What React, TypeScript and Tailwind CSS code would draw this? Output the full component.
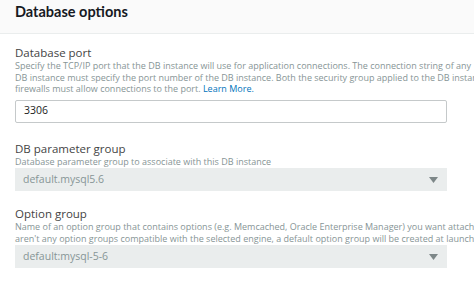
export default function App() {
  return (
    <div className="w-[474px] h-[282px] overflow-hidden bg-white font-['Open_Sans',sans-serif]">
      <div className="h-[34px] bg-[#fafafa] border-b border-[#eaeded] px-[15px] pt-[4px]">
        <h2 className="font-['Lato',sans-serif] text-[14.5px] font-bold text-[#16191f] leading-[16px]">Database options</h2>
      </div>
      <div className="pl-[15px] pr-[27px] pt-[12px]">
        <div>
          <label className="block text-[11.5px] leading-[14px] text-[#444]">Database port</label>
          <p className="text-[9px] leading-[11.5px] text-[#879596] whitespace-nowrap">
            Specify the TCP/IP port that the DB instance will use for application connections. The connection string of any
            <br />
            DB instance must specify the port number of the DB instance. Both the security group applied to the DB instance and the
            <br />
            firewalls must allow connections to the port. <span className="text-[#0073bb]">Learn More.</span>
          </p>
          <div className="mt-[5px] h-[23px] border border-[#c5c9ca] rounded-[2px] flex items-center px-[8px] text-[10.5px] text-[#222]">
            3306
          </div>
        </div>
        <div className="mt-[19px]">
          <label className="block text-[11.5px] leading-[14px] text-[#444]">DB parameter group</label>
          <p className="text-[9px] leading-[11.5px] text-[#879596] whitespace-nowrap">
            Database parameter group to associate with this DB instance
          </p>
          <div className="mt-[1px] h-[23px] bg-[#eaeded] flex items-center justify-between pl-[8px] pr-[9px] text-[10.5px] text-[#879596]">
            <span>default.mysql5.6</span>
            <svg width="9" height="6" viewBox="0 0 9 6">
              <path d="M0 0h9L4.5 6z" fill="#7d8788" />
            </svg>
          </div>
        </div>
        <div className="mt-[16px]">
          <label className="block text-[11.5px] leading-[14px] text-[#444]">Option group</label>
          <p className="text-[9px] leading-[11.5px] text-[#879596] whitespace-nowrap">
            Name of an option group that contains options (e.g. Memcached, Oracle Enterprise Manager) you want attached. If there
            <br />
            aren't any option groups compatible with the selected engine, a default option group will be created at launch.
          </p>
          <div className="mt-[1px] h-[23px] bg-[#eaeded] flex items-center justify-between pl-[8px] pr-[9px] text-[10.5px] text-[#879596]">
            <span>default:mysql-5-6</span>
            <svg width="9" height="6" viewBox="0 0 9 6">
              <path d="M0 0h9L4.5 6z" fill="#7d8788" />
            </svg>
          </div>
        </div>
      </div>
    </div>
  )
}
